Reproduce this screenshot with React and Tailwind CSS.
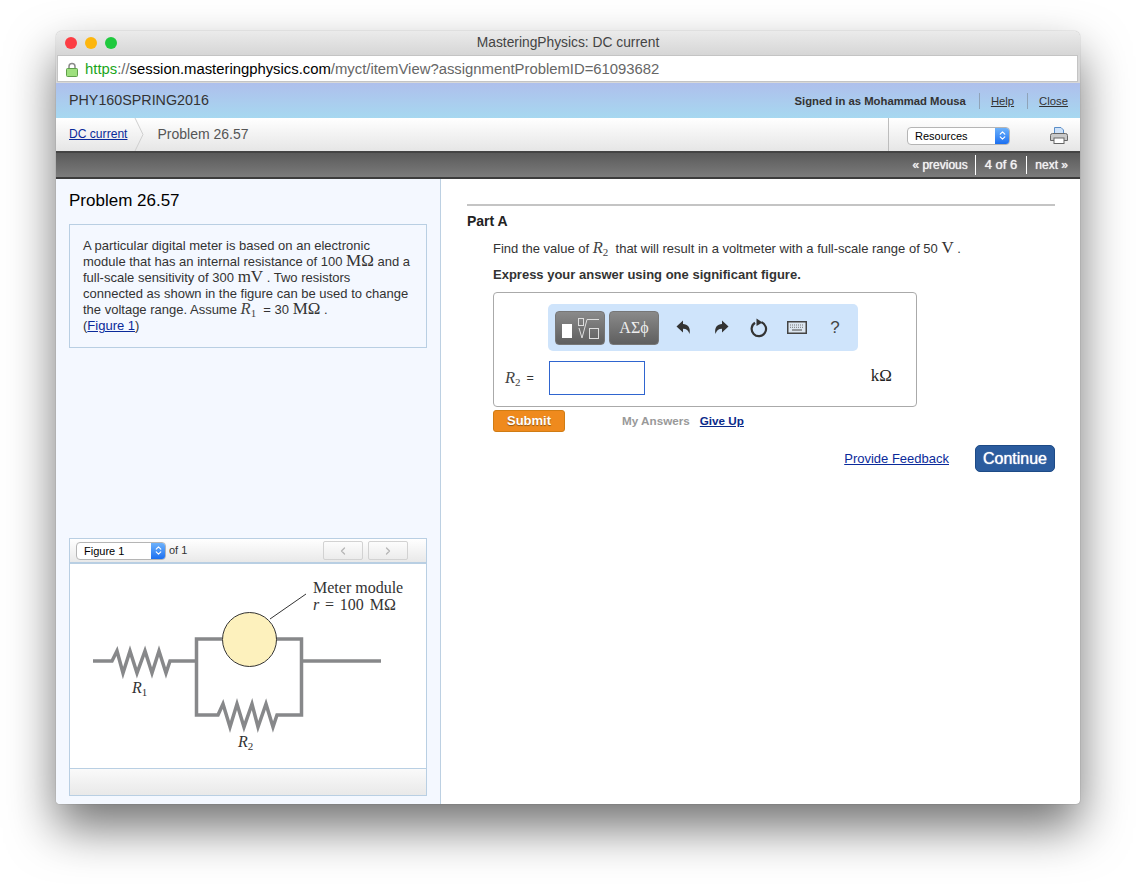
import React from 'react'
import { ChevronLeft, ChevronRight, ChevronsUpDown } from 'lucide-react'

const SANS = 'font-["Liberation_Sans",Arial,sans-serif]'

function Math({ children, className = '' }) {
  return <span className={`font-["Liberation_Serif",serif] text-[17px] leading-[0] ${className}`}>{children}</span>
}

function R({ n }) {
  return (
    <span className='font-["Liberation_Serif",serif] text-[16.5px] leading-[0] italic text-[#444]'>
      R<span className="text-[11px] not-italic leading-[0] relative top-[3px]">{n}</span>
    </span>
  )
}

function SelectArrow({ className = '' }) {
  return (
    <span className={`flex items-center justify-center bg-gradient-to-b from-[#6cb1fb] to-[#1a6ff0] text-white ${className}`}>
      <ChevronsUpDown size={11} strokeWidth={2.5} />
    </span>
  )
}

function Circuit() {
  return (
    <svg className="block w-full h-full" viewBox="70 564 356 204">
      <g fill="none" stroke="#87888a" strokeWidth="3.5">
        <path d="M93 661H112L117 651L123 673L130 651L137 673L145 651L152 673L159 651L166 673L170 661H196" />
        <path d="M222 639H196.5V715H218L223 704L230 727L237 704L244 727L252 704L258 727L266 704L273 727L277 715H301.5V639H276" />
        <path d="M301 661H381" />
      </g>
      <circle cx="249.5" cy="639.5" r="27" fill="#fdf1bd" stroke="#333" strokeWidth="1" />
      <path d="M270 619L306 594" stroke="#333" strokeWidth="1" />
      <g fill="#333" fontFamily="Liberation Serif, serif" fontSize="16">
        <text x="313" y="593">Meter module</text>
        <text x="313" y="610" wordSpacing="1.8"><tspan fontStyle="italic">r</tspan> = 100 MΩ</text>
        <text x="132" y="693" fontStyle="italic">R<tspan fontSize="11" dy="3" fontStyle="normal">1</tspan></text>
        <text x="238" y="747" fontStyle="italic">R<tspan fontSize="11" dy="3" fontStyle="normal">2</tspan></text>
      </g>
    </svg>
  )
}

function TemplateIcon() {
  return (
    <svg width="48" height="32" viewBox="0 0 48 32" fill="none">
      <rect x="6" y="12" width="10" height="14" fill="#fff" />
      <rect x="22.5" y="6.5" width="5" height="7" stroke="#ddd" />
      <path d="M23 16L26 26L31 7.5H43" stroke="#ddd" />
      <rect x="33.5" y="16.5" width="9" height="10" stroke="#ddd" />
    </svg>
  )
}

function UndoIcon({ flip }) {
  return (
    <svg className={flip ? '-scale-x-100' : ''} width="15" height="15" viewBox="0 0 15 15">
      <path d="M0.5 6.5L7 0.5V4C11.5 4 15 7.5 13.5 14C12.5 10.5 10.5 8.8 7 8.8V12.5Z" fill="#333" />
    </svg>
  )
}

function RefreshIcon() {
  return (
    <svg width="18" height="20" viewBox="0 0 18 20" fill="none">
      <path d="M11.5 4.2A7.2 7.2 0 1 1 5 4.8" stroke="#333" strokeWidth="2.2" />
      <path d="M6.5 0.5L12.5 4.5L6.5 8Z" fill="#333" />
    </svg>
  )
}

function KeyboardIcon() {
  return (
    <svg width="20" height="13" viewBox="0 0 20 13">
      <rect x="0.75" y="0.75" width="18.5" height="11.5" fill="#dce6f0" stroke="#444" strokeWidth="1.5" />
      <path d="M3 4H17M3 6.3H17" stroke="#777" strokeDasharray="1 1" />
      <path d="M5 9H15" stroke="#666" strokeWidth="1.2" />
    </svg>
  )
}

function PrinterIcon() {
  return (
    <svg className="ml-auto" width="18" height="17" viewBox="0 0 18 17">
      <path d="M4.5 0.5H11L13.5 3V8H4.5Z" fill="#cfe2f8" stroke="#5b8ec8" />
      <path d="M2.5 6.5H15.5A2 2 0 0 1 17.5 8.5V13.5H0.5V8.5A2 2 0 0 1 2.5 6.5Z" fill="#c9c9c9" stroke="#666" />
      <rect x="4" y="11" width="10" height="5.5" fill="#fff" stroke="#666" />
    </svg>
  )
}

export default function App() {
  return (
    <div className={`w-[1136px] h-[884px] bg-white overflow-hidden pt-[31px] pl-[56px] ${SANS}`}>
      <div className="w-[1024px] h-[773px] flex flex-col rounded-t-[6px] rounded-b-[4px] overflow-hidden bg-white shadow-[0_24px_48px_rgba(0,0,0,0.55),0_0_1px_rgba(0,0,0,0.5)]">
        {/* title bar */}
        <div className="relative h-[24px] shrink-0 flex items-center justify-center pt-[1px] bg-gradient-to-b from-[#ebebeb] to-[#d6d6d6]">
          <div className="absolute left-[9px] top-[6px] flex gap-[8px]">
            <span className="w-[12px] h-[12px] rounded-full bg-[#fc3d44]" />
            <span className="w-[12px] h-[12px] rounded-full bg-[#fdb60d]" />
            <span className="w-[12px] h-[12px] rounded-full bg-[#1fc93e]" />
          </div>
          <span className="text-[13.8px] text-[#444]">MasteringPhysics: DC current</span>
        </div>

        {/* url bar */}
        <div className="h-[28px] shrink-0 bg-[#d8d8d8] pl-[1px] pr-[2px] pb-[1px]">
          <div className="h-[27px] flex items-center gap-[7px] bg-white border border-[#c4c4c4] pl-[8px] pt-[1px]">
            <svg width="12" height="15" viewBox="0 0 12 15" fill="none">
              <path d="M3 7V4.5a3 3 0 0 1 6 0V7" stroke="#8a8a8a" strokeWidth="1.5" />
              <rect x="0.5" y="6.5" width="11" height="8" rx="1" fill="#9ee07e" stroke="#5f9e4a" />
            </svg>
            <span className="text-[14.85px] text-[#666]">
              <span className="text-[#1aa51a]">https</span>://<span className="text-black">session.masteringphysics.com</span>/myct/itemView?assignmentProblemID=61093682
            </span>
          </div>
        </div>

        {/* course header */}
        <div className="h-[35px] shrink-0 flex items-center justify-between pl-[13px] pr-[12px] pt-[1px] bg-gradient-to-b from-[#aebfec] to-[#a6d8f0]">
          <span className="text-[14.3px] text-[#333]">PHY160SPRING2016</span>
          <div className="flex items-center text-[11.3px] text-[#333]">
            <span className="font-bold">Signed in as Mohammad Mousa</span>
            <span className="ml-[13px] pl-[11px] border-l border-[#8fa3b8] underline">Help</span>
            <span className="ml-[13px] pl-[11px] border-l border-[#8fa3b8] underline">Close</span>
          </div>
        </div>

        {/* breadcrumb */}
        <div className="h-[33px] shrink-0 flex items-stretch bg-gradient-to-b from-white to-[#e6e6e6]">
          <div className="flex items-center pl-[13px]">
            <span className="text-[12.1px] text-[#0a2a9a] underline">DC current</span>
            <svg className="ml-[7px]" width="10" height="33" viewBox="0 0 10 33" fill="none">
              <path d="M1 0L9 16.5L1 33" stroke="#cfcfcf" />
            </svg>
            <span className="ml-[13px] text-[14px] text-[#555]">Problem 26.57</span>
          </div>
          <div className="ml-auto w-[192px] flex items-center border-l border-[#bdbdbd] pl-[18px] pr-[12px] pt-[2px]">
            <div className="w-[103px] h-[18px] flex items-stretch rounded-[4px] border border-[#b5b5b5] bg-white overflow-hidden">
              <span className="flex-1 pl-[7px] text-[11px] leading-[16px] text-black">Resources</span>
              <SelectArrow className="w-[14px]" />
            </div>
            <PrinterIcon />
          </div>
        </div>

        {/* pager */}
        <div className="h-[28px] shrink-0 flex items-center justify-end pr-[12px] border-t-2 border-b-2 border-t-[#444] border-b-[#3c3c3c] bg-gradient-to-b from-[#5a5a5a] to-[#7c7c7c] text-[12px] text-[#f2f2f2] [text-shadow:0_0_1px_#fff]">
          <span>« previous</span>
          <span className="ml-[7px] pl-[9px] border-l border-white text-[13px]">4 of 6</span>
          <span className="ml-[9px] pl-[8px] border-l border-white">next »</span>
        </div>

        <div className="flex-1 min-h-0 flex">
          {/* left column */}
          <div className="w-[385px] shrink-0 flex flex-col bg-[#f4f8ff] border-r border-[#bcd0e2] pl-[13px] pr-[13px] pt-[11px] pb-[8px]">
            <h2 className="text-[17px] leading-[21px] text-black">Problem 26.57</h2>
            <div className="mt-[13px] h-[124px] border border-[#b9cfe3] px-[13px] pt-[13px] text-[13px] leading-[16px] text-[#333] whitespace-nowrap">
              A particular digital meter is based on an electronic<br />
              module that has an internal resistance of 100 <Math>MΩ</Math> and a<br />
              full-scale sensitivity of 300 <Math>mV</Math> . Two resistors<br />
              connected as shown in the figure can be used to change<br />
              the voltage range. Assume <R n="1" /> &nbsp;= 30 <Math>MΩ</Math> .<br />
              (<span className="text-[#0a2a9a] underline">Figure 1</span>)
            </div>
            <div className="mt-auto h-[258px] flex flex-col border border-[#b9cfe3] bg-white">
              <div className="h-[25px] shrink-0 flex items-center pl-[6px] pr-[18px] border-b-2 border-[#b9cfe3] bg-gradient-to-b from-white to-[#e9e9e9]">
                <div className="w-[90px] h-[18px] flex items-stretch rounded-[4px] border border-[#b5b5b5] bg-white overflow-hidden">
                  <span className="flex-1 pl-[7px] text-[11px] leading-[16px] text-black">Figure 1</span>
                  <SelectArrow className="w-[14px]" />
                </div>
                <span className="ml-[3px] text-[11px] text-[#333]">of 1</span>
                <div className="ml-auto flex gap-[5px]">
                  <span className="w-[40px] h-[19px] flex items-center justify-center rounded-[2px] border border-[#d2d2d2] text-[#b5b5b5]"><ChevronLeft size={12} strokeWidth={2.5} /></span>
                  <span className="w-[40px] h-[19px] flex items-center justify-center rounded-[2px] border border-[#d2d2d2] text-[#b5b5b5]"><ChevronRight size={12} strokeWidth={2.5} /></span>
                </div>
              </div>
              <div className="flex-1 min-h-0"><Circuit /></div>
              <div className="h-[27px] shrink-0 border-t border-[#b9cfe3] bg-gradient-to-b from-[#fafafa] to-[#e9e9e9]" />
            </div>
          </div>

          {/* right column */}
          <div className="flex-1 min-w-0 pl-[26px] pr-[25px] pt-[25px] text-[#333]">
            <div className="border-t-2 border-[#c4c4c4] pt-[7px]">
              <h3 className="text-[14px] leading-[16px] font-bold text-[#222]">Part A</h3>
            </div>
            <div className="pl-[26px]">
              <p className="mt-[11px] text-[13px] leading-[18px]">
                Find the value of <R n="2" /> &nbsp;that will result in a voltmeter with a full-scale range of 50 <Math>V</Math> .
              </p>
              <p className="mt-[9px] text-[13px] leading-[16px] font-bold">Express your answer using one significant figure.</p>
              <div className="mt-[9px] w-[424px] h-[115px] rounded-[4px] border border-[#aaa] pl-[11px] pr-[24px] pt-[11px]">
                <div className="ml-[43px] w-[310px] h-[47px] flex items-center rounded-[5px] bg-[#cfe4fb] pl-[7px]">
                  <span className="w-[50px] h-[34px] flex items-center justify-center rounded-[4px] border border-[#777] bg-gradient-to-b from-[#8a8a8a] to-[#5f5f5f]"><TemplateIcon /></span>
                  <span className='ml-[4px] w-[50px] h-[34px] flex items-center justify-center rounded-[4px] border border-[#777] bg-gradient-to-b from-[#8a8a8a] to-[#5f5f5f] font-["Liberation_Serif",serif] text-[16px] text-[#eee]'>ΑΣϕ</span>
                  <span className="ml-[5px] w-[38px] flex justify-center"><UndoIcon /></span>
                  <span className="w-[38px] flex justify-center"><UndoIcon flip /></span>
                  <span className="w-[38px] flex justify-center"><RefreshIcon /></span>
                  <span className="w-[38px] flex justify-center"><KeyboardIcon /></span>
                  <span className="w-[38px] text-center text-[17px] leading-[20px] text-[#444]">?</span>
                </div>
                <div className="mt-[10px] flex items-center">
                  <span className="w-[44px] flex items-center gap-[6px] text-[12.5px] whitespace-nowrap"><R n="2" /> =</span>
                  <span className="w-[96px] h-[34px] border border-[#2f65cf] bg-white" />
                  <Math className="ml-auto text-[#222] -translate-y-[2px]">kΩ</Math>
                </div>
              </div>
              <div className="mt-[3px] flex items-center">
                <span className="w-[72px] h-[22px] flex items-center justify-center rounded-[3px] border border-[#d07c14] bg-[#ef8a1d] text-[13px] font-bold text-white [text-shadow:0_1px_1px_rgba(0,0,0,0.4)]">Submit</span>
                <span className="ml-[57px] text-[11.7px] font-bold text-[#999]">My Answers</span>
                <span className="ml-[10px] text-[11.7px] font-bold text-[#0a2a8a] underline">Give Up</span>
              </div>
            </div>
            <div className="mt-[13px] flex items-center justify-end">
              <span className="text-[13px] text-[#0a2a9a] underline">Provide Feedback</span>
              <span className="ml-[26px] w-[80px] h-[27px] flex items-center justify-center rounded-[5px] border border-[#1d4a86] bg-[#2b5c9e] text-[16px] text-white [text-shadow:0_0_1px_#fff]">Continue</span>
            </div>
          </div>
        </div>
      </div>
    </div>
  )
}
